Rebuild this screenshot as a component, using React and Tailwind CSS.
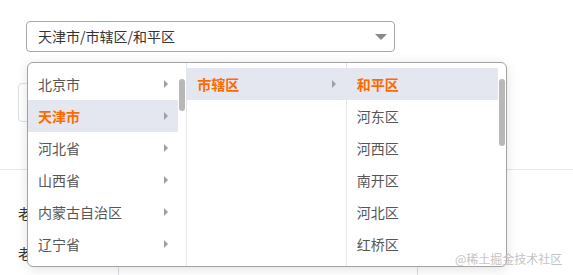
import React from 'react';

const provinces = ['北京市', '天津市', '河北省', '山西省', '内蒙古自治区', '辽宁省'];
const cities = ['市辖区'];
const districts = ['和平区', '河东区', '河西区', '南开区', '河北区', '红桥区'];

const Arrow = () => (
  <span className="ml-auto h-0 w-0 border-y-[4px] border-l-[4px] border-y-transparent border-l-[#a0a0a0]" />
);

const Row = ({ label, active, hasChild }) => (
  <div
    className={`flex h-8 items-center pl-[10px] pr-[10px] text-[14px] ${
      active ? 'bg-[#e4e7f0] font-bold text-[#ff6a00]' : 'text-[#555]'
    }`}
  >
    <span>{label}</span>
    {hasChild && <Arrow />}
  </div>
);

const Column = ({ items, activeIndex, hasChild, scrollTop, scrollHeight, last }) => (
  <div className={`relative h-full w-[160px] pt-[5px] ${last ? '' : 'border-r border-[#e4e6eb]'}`}>
    <div className={scrollHeight ? 'mr-[8px]' : ''}>
      {items.map((item, i) => (
        <Row key={item} label={item} active={i === activeIndex} hasChild={hasChild} />
      ))}
    </div>
    {scrollHeight && (
      <div
        className="absolute right-[1px] w-[6px] rounded-full bg-[#b8b8b8]"
        style={{ top: scrollTop, height: scrollHeight }}
      />
    )}
  </div>
);

export default function App() {
  return (
    <div
      className="relative h-[275px] w-[573px] overflow-hidden bg-white"
      style={{ fontFamily: '"Noto Sans CJK SC", "Noto Sans", sans-serif' }}
    >
      <div className="pt-[21px] pl-[26px]">
        <div className="flex h-[31px] w-[369px] items-center rounded-[4px] border border-[#a8a8a8] pl-[11px] pr-[7px] text-[14px] text-[#333]">
          <span>天津市/市辖区/和平区</span>
          <span className="ml-auto h-0 w-0 border-x-[6px] border-t-[6px] border-x-transparent border-t-[#8a8a8a]" />
        </div>
      </div>

      <div className="ml-[18px] mt-[31px] h-[39px] w-[200px] rounded-[4px] border border-[#dcdfe6]" />

      <div className="mt-[47px] border-t border-[#e6e6e6]" />

      <div className="flex flex-col pl-[18px] pt-[33px] text-[14px] text-[#333]">
        <div className="h-[40px] leading-[20px]">老师</div>
        <div className="flex h-[20px] items-start leading-[20px]">
          <span>老师</span>
          <div className="ml-[72px] mt-[12px] h-[30px] w-[300px] rounded-[4px] border border-[#dcdfe6]" />
        </div>
      </div>

      <div className="absolute left-[27px] top-[62px] flex h-[205px] w-[480px] overflow-hidden rounded-[6px] border border-[#a3a3a3] bg-white shadow-[0_2px_12px_rgba(0,0,0,0.12)]">
        <Column items={provinces} activeIndex={1} hasChild scrollTop={16} scrollHeight={32} />
        <Column items={cities} activeIndex={0} hasChild />
        <Column items={districts} activeIndex={0} scrollTop={16} scrollHeight={67} last />
      </div>

      <div className="absolute left-[455px] top-[250px] text-[12px] text-[#c4c4c4]">
        @稀土掘金技术社区
      </div>
    </div>
  );
}
